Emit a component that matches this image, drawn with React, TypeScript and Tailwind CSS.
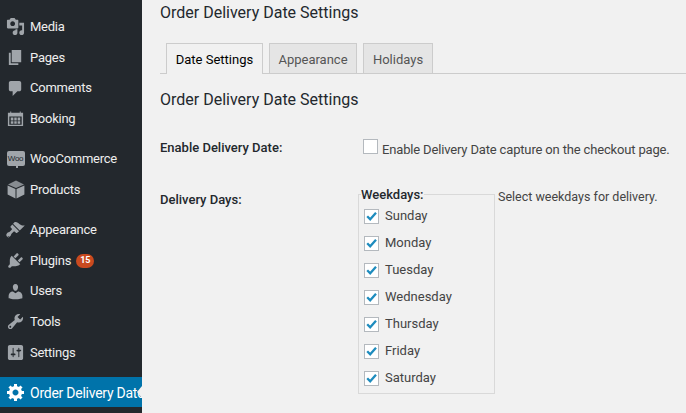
import React from "react";

const Dash = ({ d, size = 19 }: { d: string; size?: number }) => (
  <svg width={size} height={size} viewBox="0 0 20 20" fill="currentColor" fillRule="evenodd">
    <path d={d} />
  </svg>
);
const P = {
  media: "M13 11V4c0-.55-.45-1-1-1h-1.670L9 1H5L3.670 3H2c-.55 0-1 .45-1 1v7c0 .55.45 1 1 1h10c.55 0 1-.45 1-1zM7 4.500c1.380 0 2.500 1.120 2.500 2.500S8.380 9.500 7 9.500 4.500 8.380 4.500 7 5.620 4.500 7 4.500zM14 6h5v10.500c0 1.380-1.120 2.500-2.500 2.500S14 17.880 14 16.500s1.120-2.500 2.500-2.500c.17 0 .34.020.5.050V9h-3V6zm-4 8.050V13h2v3.500c0 1.380-1.120 2.500-2.500 2.500S7 17.880 7 16.500 8.120 14 9.500 14c.17 0 .34.020.5.050z",
  page: "M6 15V2h10v13H6zm-1 1h8v2H3V5h2v11z",
  comment: "M5 2h9c1.100 0 2 .9 2 2v7c0 1.100-.9 2-2 2h-2l-5 5v-5H5c-1.100 0-2-.9-2-2V4c0-1.100.9-2 2-2z",
  brush: "M14.480 11.060L7.410 3.990l1.500-1.500c.5-.56 2.300-.47 3.510.32 1.210.8 1.430 1.280 2.910 2.100 1.180.64 2.450 1.260 4.450.85zm-.71.71L6.700 4.700 4.930 6.470c-.39.39-.39 1.020 0 1.410l1.060 1.060c.39.39.39 1.020 0 1.410l-2.120 2.120c-.39.38-1.820.52-2.770 1.460-.95.95-1.010 2.400-.09 3.320.93.93 2.380.87 3.330-.08.95-.95 1.080-2.380 1.460-2.770l2.120-2.120c.39-.39 1.020-.39 1.410 0l1.060 1.060c.39.39 1.020.39 1.410 0zM2.500 18.500c-.42 0-.75-.34-.75-.76s.33-.75.75-.75.75.33.75.75-.33.76-.75.76z",
  plug: "M13.110 4.360L9.870 7.600 8 5.730l3.240-3.240c.35-.34 1.050-.2 1.560.32.52.51.66 1.210.31 1.550zm-8 1.770l.91-1.120 9.010 9.010-1.190.84c-.71.71-2.630 1.160-3.820 1.160H6.140L4.900 17.260c-.59.59-1.540.59-2.120 0-.59-.58-.59-1.530 0-2.120l1.240-1.240v-3.880c0-1.130.4-3.190 1.090-3.890zm7.260 3.970l3.240-3.240c.34-.35 1.040-.21 1.550.31.52.51.66 1.210.31 1.550l-3.240 3.250z",
  user: "M10 9.250c-2.270 0-2.730-3.440-2.730-3.440C7 4.020 7.820 2 9.970 2c2.160 0 2.980 2.020 2.710 3.810 0 0-.41 3.440-2.680 3.440zm0 2.570L12.720 10c2.390 0 4.520 2.330 4.520 4.530v2.490s-3.650 1.130-7.240 1.130c-3.650 0-7.240-1.130-7.240-1.130v-2.490c0-2.250 1.940-4.480 4.470-4.480z",
  tools: "M16.680 9.770c-1.340 1.340-3.300 1.670-4.950.99l-5.410 6.520c-.99.99-2.590.99-3.580 0s-.99-2.590 0-3.570l6.520-5.420c-.68-1.650-.35-3.610.99-4.950 1.280-1.280 3.120-1.620 4.720-1.060l-2.890 2.890 2.820 2.820 2.860-2.870c.53 1.580.18 3.390-1.080 4.650zM3.810 16.210c.4.39 1.040.39 1.430 0 .4-.4.4-1.040 0-1.430-.39-.4-1.030-.4-1.430 0-.39.39-.39 1.030 0 1.430z",
  settings: "M18 16V4c0-1.100-.9-2-2-2H4c-1.100 0-2 .9-2 2v12c0 1.100.9 2 2 2h12c1.100 0 2-.9 2-2zM8 11h1c.55 0 1 .45 1 1s-.45 1-1 1H8v1.500c0 .28-.22.5-.5.5s-.5-.22-.5-.5V13H6c-.55 0-1-.45-1-1s.45-1 1-1h1V5.500c0-.28.22-.5.5-.5s.5.22.5.5V11zm5-2h-1c-.55 0-1-.45-1-1s.45-1 1-1h1V5.500c0-.28.22-.5.5-.5s.5.22.5.5V7h1c.55 0 1 .45 1 1s-.45 1-1 1h-1v5.500c0 .28-.22.5-.5.5s-.5-.22-.5-.5V9z",
  gear: "M18 12h-2.180c-.17.7-.44 1.350-.81 1.930l1.540 1.540-2.100 2.100-1.540-1.540c-.58.36-1.230.63-1.910.79V19H8v-2.180c-.68-.16-1.330-.43-1.910-.79l-1.540 1.540-2.120-2.120 1.540-1.540c-.36-.58-.63-1.230-.79-1.910H1V9.030h2.170c.16-.7.440-1.360.810-1.940L2.430 5.550l2.100-2.100 1.540 1.540c.58-.37 1.240-.64 1.930-.81V2h3v2.180c.68.160 1.330.43 1.910.79l1.540-1.540 2.120 2.120-1.540 1.540c.36.590.64 1.240.80 1.940H18V12zm-8.500 1.500c1.660 0 3-1.340 3-3s-1.340-3-3-3-3 1.340-3 3 1.340 3 3 3z",
  calendar: "M2 4h2.500V2.500h1V4h9V2.500h1V4H18v14H2zM3.500 8v8.500h13V8zM5 9h2.800v3H5zM8.700 9h2.600v3H8.700zM12.200 9H15v3h-2.800zM5 12.800h2.800v2.700H5zM8.700 12.800h2.600v2.700H8.700zM12.200 12.800H15v2.700h-2.800z",
};
const WooIcon = () => (
  <div className="relative flex h-[15px] w-[18px] items-center justify-center rounded-[2px] bg-[#a0a5aa] text-[8px] leading-none text-[#23282d] [font-family:'Liberation_Sans',sans-serif]">
    Woo
    <span className="absolute -bottom-[2px] left-[9px] h-[3px] w-[2px] bg-[#a0a5aa]" />
  </div>
);
const BoxIcon = () => (
  <svg width="18" height="19" viewBox="0 0 18 19" fill="currentColor">
    <path d="M9 .5 17 4.500 9 8 1 4.500Z" opacity=".8" />
    <path d="M.6 5.500 8.500 9V18.500L.6 14.500ZM17.400 5.500 9.500 9V18.500L17.400 14.500Z" />
  </svg>
);

type Item = { label: string; icon: React.ReactNode; gap?: boolean; badge?: string };
const items: Item[] = [
  { label: "Media", icon: <Dash d={P.media} /> },
  { label: "Pages", icon: <Dash d={P.page} /> },
  { label: "Comments", icon: <Dash d={P.comment} /> },
  { label: "Booking", icon: <Dash d={P.calendar} /> },
  { label: "WooCommerce", icon: <WooIcon />, gap: true },
  { label: "Products", icon: <BoxIcon /> },
  { label: "Appearance", icon: <Dash d={P.brush} />, gap: true },
  { label: "Plugins", icon: <Dash d={P.plug} />, badge: "15" },
  { label: "Users", icon: <Dash d={P.user} /> },
  { label: "Tools", icon: <Dash d={P.tools} /> },
  { label: "Settings", icon: <Dash d={P.settings} /> },
];
const days = ["Sunday", "Monday", "Tuesday", "Wednesday", "Thursday", "Friday", "Saturday"];

const Check = () => (
  <span className="flex h-[15px] w-[15px] shrink-0 items-center justify-center border border-[#b4b9be] bg-white">
    <svg width="13" height="13" viewBox="0 0 13 13">
      <path d="M2.200 6.200 5.200 9.300 11 2.800" fill="none" stroke="#1e8cbe" strokeWidth="2.300" />
    </svg>
  </span>
);

export default function App() {
  return (
    <div className="flex h-[413px] w-[686px] overflow-hidden bg-[#f1f1f1] text-[13px] text-[#444] [font-family:Roboto,sans-serif]">
      <nav className="flex w-[142px] shrink-0 flex-col bg-[#23282d] pt-[11.400px] text-[13px] tracking-[-0.25px] text-[#eee]">
        {items.map((it) => (
          <div key={it.label} className={`flex h-[30.700px] shrink-0 items-center ${it.gap ? "mt-[9.500px]" : ""}`}>
            <span className="flex w-[30px] shrink-0 items-center justify-center pl-[1px] text-[#a0a5aa]">{it.icon}</span>
            <span>{it.label}</span>
            {it.badge && (
              <span className="ml-[5px] flex h-[14px] w-[18px] items-center justify-center rounded-full bg-[#ca4a1f] text-[9px] font-bold text-white">
                {it.badge}
              </span>
            )}
          </div>
        ))}
        <div className="relative mt-[8.600px] flex h-[30px] shrink-0 items-center overflow-hidden bg-[#0073aa] pt-[3px] text-[14px] text-white">
          <span className="mt-[-3px] flex w-[30px] shrink-0 items-center justify-center pl-[1px]">
            <Dash d={P.gear} size={20} />
          </span>
          <span className="whitespace-nowrap">Order Delivery Date</span>
          <span className="absolute right-0 top-[9px] h-0 w-0 border-y-[6px] border-r-[5px] border-y-transparent border-r-[#f1f1f1]" />
        </div>
      </nav>

      <main className="min-w-0 flex-1 pl-[18px]">
        <h1 className="pt-[2px] text-[16px] leading-[22px] font-normal text-[#23282d]">Order Delivery Date Settings</h1>

        <div className="mt-[19px] flex h-[31px] gap-[6px] border-b border-[#ccc] pl-[6px] text-[13px]">
          <div className="flex h-[31px] w-[97px] shrink-0 items-center justify-center border border-b-0 border-[#ccc] bg-[#f1f1f1] pt-[2px] text-[#000]">Date Settings</div>
          <div className="flex h-[30px] w-[88px] shrink-0 items-center justify-center border border-b-0 border-[#ccc] bg-[#e5e5e5] pt-[2px] text-[#555]">Appearance</div>
          <div className="flex h-[30px] w-[70px] shrink-0 items-center justify-center border border-b-0 border-[#ccc] bg-[#e5e5e5] pt-[2px] text-[#555]">Holidays</div>
        </div>

        <h2 className="mt-[15px] text-[16px] leading-[22px] font-normal text-[#23282d]">Order Delivery Date Settings</h2>

        <div className="mt-[27px] flex">
          <div className="w-[203px] shrink-0 text-[13px] leading-[20px] font-medium text-[#23282d]">Enable Delivery Date:</div>
          <span className="mt-[1px] h-[15px] w-[15px] shrink-0 border border-[#b4b9be] bg-white" />
          <span className="ml-[4px] mt-[2px] text-[13px] leading-[20px] tracking-[-0.16px] whitespace-nowrap">Enable Delivery Date capture on the checkout page.</span>
        </div>

        <div className="mt-[30px] flex">
          <div className="w-[198px] shrink-0 text-[13px] leading-[20px] font-medium text-[#23282d]">Delivery Days:</div>
          <fieldset className="mt-[-4px] h-[208px] w-[137px] shrink-0 border border-[#d9d9d9] pl-[5px]">
            <legend className="ml-[-3px] pt-[2px] text-[13px] leading-[14px] font-medium text-[#23282d]">Weekdays:</legend>
            <div className="mt-[4px] flex flex-col gap-[7px]">
              {days.map((d) => (
                <div key={d} className="flex h-[20px] items-center gap-[6px] text-[13px]">
                  <Check />
                  <span>{d}</span>
                </div>
              ))}
            </div>
          </fieldset>
          <span className="ml-[3px] mt-[-2px] text-[12.500px] leading-[18px] whitespace-nowrap">Select weekdays for delivery.</span>
        </div>
      </main>
    </div>
  );
}
